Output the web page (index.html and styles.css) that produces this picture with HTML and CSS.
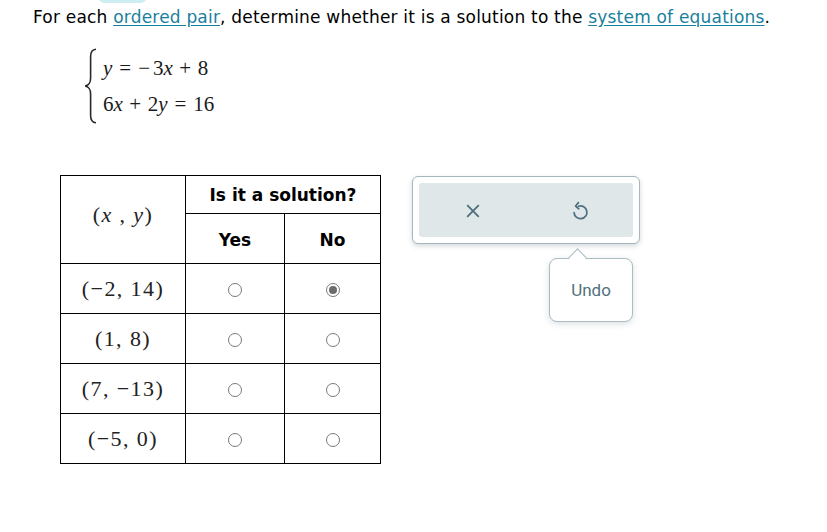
FILE: index.html
```html
<!DOCTYPE html>
<html>
<head>
<meta charset="utf-8">
<link rel="stylesheet" href="styles.css">
</head>
<body>
<div class="tab"></div>
<p class="prompt">For each <a class="link">ordered pair</a>, determine whether it is a solution to the <a class="link">system of equations</a>.</p>
<div class="system">
  <svg class="brace" width="13" height="76" viewBox="0 0 13 76"><path d="M12 1.2C8.2 1.5 6.6 3.5 6.6 8.5L6.6 30C6.6 35 5.3 37 1.2 38C5.3 39 6.6 41 6.6 46L6.6 67.5C6.6 72.5 8.2 74.5 12 74.8" stroke="#2a2a2a" stroke-width="1.6" fill="none"/></svg>
  <div class="eqs">
    <div class="eq"><i>y</i><span class="rel">=</span><span class="neg">−</span>3<i>x</i><span class="bin">+</span>8</div>
    <div class="eq">6<i>x</i><span class="bin">+</span>2<i>y</i><span class="rel">=</span>16</div>
  </div>
</div>
<div class="work">
  <table class="grid">
    <tr class="h1">
      <td rowspan="2" class="math pair">(<i>x</i> , <i>y</i>)</td>
      <th colspan="2">Is it a solution?</th>
    </tr>
    <tr class="h2"><th class="yes">Yes</th><th>No</th></tr>
    <tr><td class="math">(−2, 14)</td><td><span class="radio"></span></td><td><span class="radio on"></span></td></tr>
    <tr><td class="math">(1, 8)</td><td><span class="radio"></span></td><td><span class="radio"></span></td></tr>
    <tr><td class="math">(7, −13)</td><td><span class="radio"></span></td><td><span class="radio"></span></td></tr>
    <tr><td class="math">(−5, 0)</td><td><span class="radio"></span></td><td><span class="radio"></span></td></tr>
  </table>
  <div class="toolbox">
    <div class="tools">
      <span class="tool">
        <svg width="16" height="16" viewBox="0 0 16 16"><path d="M2.2 2.2L13.8 13.8M13.8 2.2L2.2 13.8" stroke="#4b6f7c" stroke-width="1.8" fill="none"/></svg>
      </span>
      <span class="tool">
        <svg width="18" height="20" viewBox="0 0 18 20"><path d="M7.6 5.2A6.4 6.4 0 1 1 3.1 11.6" stroke="#4b6f7c" stroke-width="1.7" fill="none" stroke-linecap="round"/><path d="M7.4 1.6L4.6 5L7.8 7.8" stroke="#4b6f7c" stroke-width="1.7" fill="none" stroke-linecap="round" stroke-linejoin="round"/></svg>
      </span>
    </div>
    <div class="tip"><span class="arrow"></span>Undo</div>
  </div>
</div>
</body>
</html>
```
FILE: styles.css
```css
html, body { margin: 0; padding: 0; background: #fff; }
body { font-family: "DejaVu Sans", Verdana, sans-serif; color: #000; width: 827px; height: 532px; overflow: hidden; position: relative; }
.tab { position: absolute; left: 98px; top: -10px; width: 49px; height: 13px; border-radius: 7px; background: #cdeef3; }
.prompt { margin: 0; padding: 7px 0 0 33px; font-size: 17px; line-height: 20px; letter-spacing: 0.2px; white-space: nowrap; }
.link { color: #1a7f9c; text-decoration: underline; text-underline-offset: 2px; }
.system { display: flex; align-items: flex-start; margin: 20px 0 0 84px; }
.brace { display: block; margin-top: 1px; margin-right: 6px; }
.eqs { font-family: "Liberation Serif", "Times New Roman", serif; font-size: 21px; line-height: 36px; color: #1a1a1a; padding-top: 3px; }
.eq { white-space: nowrap; }
.eq i { font-style: italic; }
.rel { padding: 0 7px; }
.bin { padding: 0 6.5px; }
.neg { padding: 0 3px 0 0; }
.work { display: flex; align-items: flex-start; margin: 51px 0 0 60px; }
.grid { border-collapse: collapse; width: 321px; }
.grid td, .grid th { border: 1px solid #000; text-align: center; padding: 0; }
.grid th { font-size: 17px; font-weight: bold; }
.h1 th { height: 37px; }
.h2 th { height: 47px; padding-top: 2px; }
.grid td { height: 49px; }
.grid td:first-child { width: 124px; }
.grid .yes { width: 98px; }
.math { font-family: "Liberation Serif", "Times New Roman", serif; font-size: 22px; color: #222; letter-spacing: 1.4px; }
.math i { font-style: italic; }
.pair { padding-bottom: 10px !important; }
.radio { display: inline-block; width: 12px; height: 12px; border: 1px solid #7a7a7a; border-radius: 50%; vertical-align: middle; position: relative; box-sizing: content-box; margin-top: 1px; }
.radio.on::after { content: ""; position: absolute; left: 2px; top: 2px; width: 8px; height: 8px; border-radius: 50%; background: #6b6b6b; }
.toolbox { position: relative; margin: 1px 0 0 31px; }
.tools { width: 214px; height: 54px; padding: 6px; border: 1px solid #a3b8bf; border-radius: 6px; background: #fff; box-shadow: 0 2px 5px rgba(80,100,110,0.25); display: flex; }
.tools .tool { flex: 1; background: #dfe7e9; display: flex; align-items: center; justify-content: center; }
.tools .tool:first-child { border-radius: 3px 0 0 3px; padding-top: 2px; }
.tools .tool:last-child { border-radius: 0 3px 3px 0; padding-top: 1px; }
.tip { position: absolute; left: 137px; top: 82px; width: 82px; height: 62px; border: 1px solid #a8bcc2; border-radius: 8px; background: #fff; box-shadow: 0 2px 6px rgba(80,100,110,0.2); color: #52717d; font-family: Roboto, "Liberation Sans", sans-serif; font-size: 17px; display: flex; align-items: center; justify-content: center; }
.arrow { position: absolute; left: 21px; top: -8px; width: 12px; height: 12px; background: #fff; border-left: 1px solid #a8bcc2; border-top: 1px solid #a8bcc2; transform: rotate(45deg); }
```
